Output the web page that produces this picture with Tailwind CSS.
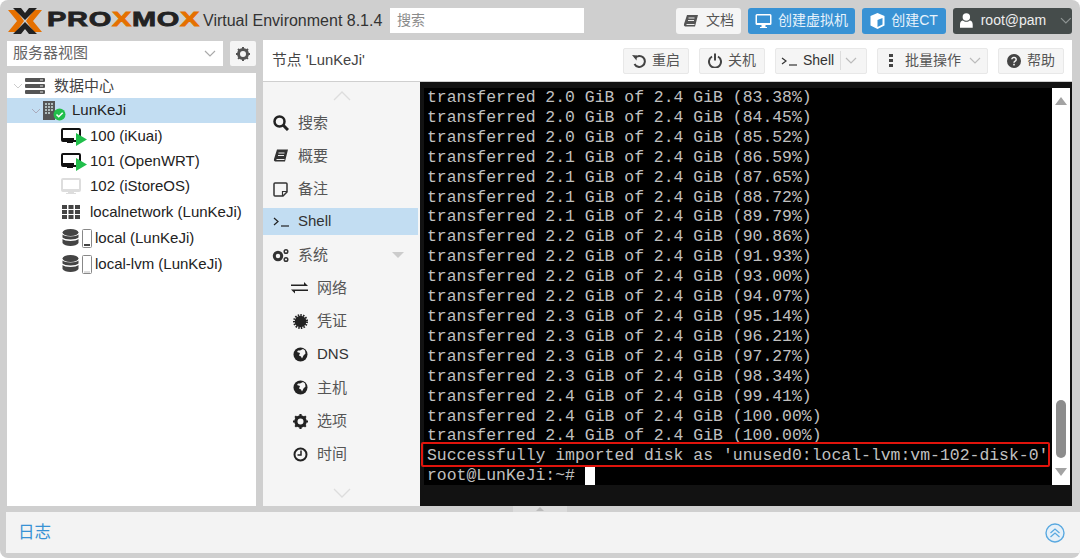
<!DOCTYPE html>
<html lang="en">
<head>
    <meta charset="UTF-8">
    <title>LunKeJi - Proxmox Virtual Environment</title>
    <script src="https://cdn.jsdelivr.net/npm/@tailwindcss/browser@4"></script>
</head>
<body class="bg-white font-['Liberation_Sans','Noto_Sans_CJK_SC',sans-serif] text-[15px] text-[#3d3d3d]">
<div class="w-[1080px] h-[558px] bg-[#cfcfcf] rounded-[8px] flex flex-col overflow-hidden">

    <!-- top bar -->
    <header class="h-[40px] shrink-0 flex items-center pt-[1px] pl-[8px] pr-[8px]">
        <svg width="34" height="26" viewBox="0 0 34 26" class="shrink-0">
            <path d="M0 2h8l8 11-8 11h-8l9-11zM34 2h-8l-8 11 8 11h8l-9-11z" fill="#e57000"/>
            <path d="M5 0h8l4 5 4-5h8l-12 12zM5 26h8l4-5 4 5h8l-12-12z" fill="#222"/>
        </svg>
        <div class="ml-[5px] w-[156px] shrink-0">
            <span class="inline-block origin-left scale-x-[1.38] text-[21px] leading-none font-bold tracking-[0.500px] whitespace-nowrap text-[#222] [-webkit-text-stroke:0.800px_#222]">PRO<span class="text-[#e57000] [-webkit-text-stroke:0.800px_#e57000]">X</span>MO<span class="text-[#e57000] [-webkit-text-stroke:0.800px_#e57000]">X</span></span>
        </div>
        <span class="w-[187px] shrink-0 text-[16px] text-[#333] whitespace-nowrap">Virtual Environment 8.1.4</span>
        <div class="w-[194px] h-[25px] bg-white flex items-center px-[7px] text-[14px] text-[#8b8b8b]">搜索</div>
        <div class="ml-auto flex items-center gap-[7px] text-[14px]">
            <button class="w-[65px] h-[26px] bg-[#f5f5f5] rounded-[3px] flex items-center justify-center gap-[7px] text-[#555]">
                <svg width="16" height="14" viewBox="0 0 16 14"><path d="M4 1h11l-3 11.500h-10a2 2 0 0 1-1-2.500z" fill="#555"/><path d="M3.500 10.500h8" stroke="#eee"/><path d="M5.500 4h6M5 6.500h6" stroke="#eee"/></svg>
                文档
            </button>
            <button class="w-[107px] h-[26px] bg-[#3892d4] rounded-[3px] flex items-center justify-center gap-[6px] text-white">
                <svg width="17" height="16" viewBox="0 0 17 16"><path d="M2 1h13a1.500 1.500 0 0 1 1.500 1.500v8a1.500 1.500 0 0 1-1.500 1.500h-13a1.500 1.500 0 0 1-1.500-1.500v-8a1.500 1.500 0 0 1 1.500-1.500z" fill="#fff"/><rect x="2" y="2.500" width="13" height="7.500" fill="#3892d4"/><path d="M6.500 12h4v2h1.500v1h-7v-1h1.500z" fill="#fff"/></svg>
                <span class="text-[#e8f3fb]">创建虚拟机</span>
            </button>
            <button class="w-[84px] h-[26px] bg-[#3892d4] rounded-[3px] flex items-center justify-center gap-[6px] text-white">
                <svg width="15" height="16" viewBox="0 0 15 16"><path d="M7.500 0l7 3v9.500l-7 3.500-7-3.500v-9.500z" fill="#fff"/><path d="M7.500 7l5-2v6.500l-5 2.500z" fill="#3892d4"/></svg>
                <span class="text-[#e8f3fb]">创建CT</span>
            </button>
            <button class="w-[119px] h-[26px] bg-[#454c4b] rounded-[3px] flex items-center pl-[7px] gap-[8px] text-[#eee]">
                <svg width="13" height="15" viewBox="0 0 13 15"><circle cx="6.500" cy="4" r="3.800" fill="#fff"/><path d="M0 15v-3.500c0-2.500 1.500-4 3-4 1 1 2 1.200 3.500 1.200s2.500-.2 3.500-1.200c1.500 0 3 1.500 3 4v3.500z" fill="#fff"/></svg>
                root@pam
                <svg width="12" height="7" viewBox="0 0 12 7" class="ml-[6px]"><path d="M1 1l5 5 5-5" fill="none" stroke="#8f9594" stroke-width="1.200"/></svg>
            </button>
        </div>
    </header>

    <!-- main area -->
    <main class="h-[466px] shrink-0 flex gap-[7px] px-[7px]">
        <!-- resource tree -->
        <aside class="w-[249px] shrink-0 flex flex-col">
            <div class="mt-[1px] h-[25px] flex gap-[7px] shrink-0">
                <div class="w-[216px] bg-white flex items-center justify-between pl-[6px] pr-[7px] text-[#666]">
                    服务器视图
                    <svg width="12" height="7" viewBox="0 0 12 7"><path d="M1 1l5 5 5-5" fill="none" stroke="#aaa" stroke-width="1.200"/></svg>
                </div>
                <div class="w-[26px] bg-[#f5f5f5] rounded-[2px] flex items-center justify-center">
                    <svg width="14" height="14" viewBox="0 0 14 14"><circle cx="7" cy="7" r="4.500" fill="none" stroke="#555" stroke-width="3"/><path d="M7 0v14M0 7h14M2 2l10 10M12 2l-10 10" stroke="#555" stroke-width="2" stroke-dasharray="2.500 9 2.500"/></svg>
                </div>
            </div>
            <div class="mt-[7px] flex-1 bg-white">
                <div class="h-[25px] pt-[1px] flex items-center">
                    <svg width="10" height="6" viewBox="0 0 10 6" class="ml-[6px]"><path d="M1 1l4 4 4-4" fill="none" stroke="#ccc"/></svg>
                    <svg width="20" height="16" viewBox="0 0 20 16" class="ml-[2px]"><rect y="0" width="20" height="4" rx="1" fill="#555"/><rect y="6" width="20" height="4" rx="1" fill="#555"/><rect y="12" width="20" height="4" rx="1" fill="#555"/><path d="M15 2h3M15 8h3M15 14h3" stroke="#ddd"/></svg>
                    <span class="ml-[9px] text-[#444]">数据中心</span>
                </div>
                <div class="h-[25px] flex items-center bg-[#c2ddf2]">
                    <svg width="10" height="6" viewBox="0 0 10 6" class="ml-[24px]"><path d="M1 1l4 4 4-4" fill="none" stroke="#aab"/></svg>
                    <div class="relative ml-[2px] w-[23px] h-[20px]">
                        <svg width="12" height="19" viewBox="0 0 12 19"><path d="M0 0h12v19h-12z" fill="#555"/><path d="M2 3h2M5 3h2M8 3h2M2 6h2M5 6h2M8 6h2M2 9h2M5 9h2M8 9h2M2 12h2M5 12h2" stroke="#cdd" stroke-width="1.500"/></svg>
                        <svg width="13" height="13" viewBox="0 0 13 13" class="absolute left-[10px] top-[7px]"><circle cx="6.500" cy="6.500" r="6" fill="#21bf4b"/><path d="M3.500 6.500l2.200 2.200 4-4" fill="none" stroke="#fff" stroke-width="1.600"/></svg>
                    </div>
                    <span class="ml-[6px] text-[#222]">LunKeJi</span>
                </div>
                <div class="h-[25px] mt-[1px] flex items-center pl-[54px]">
                    <svg width="26" height="18" viewBox="0 0 26 18"><path d="M2 1h16a1 1 0 0 1 1 1v10a1 1 0 0 1-1 1h-16a1 1 0 0 1-1-1v-10a1 1 0 0 1 1-1z" fill="none" stroke="#111" stroke-width="2"/><path d="M1 10h12v3h-12zM6 13h6v2h-6z" fill="#111"/><path d="M15 5l11 6.500-11 6.500z" fill="#21bf4b"/></svg>
                    <span class="ml-[3px] text-[#222]">100 (iKuai)</span>
                </div>
                <div class="h-[25px] flex items-center pl-[54px]">
                    <svg width="26" height="18" viewBox="0 0 26 18"><path d="M2 1h16a1 1 0 0 1 1 1v10a1 1 0 0 1-1 1h-16a1 1 0 0 1-1-1v-10a1 1 0 0 1 1-1z" fill="none" stroke="#111" stroke-width="2"/><path d="M1 10h12v3h-12zM6 13h6v2h-6z" fill="#111"/><path d="M15 5l11 6.500-11 6.500z" fill="#21bf4b"/></svg>
                    <span class="ml-[3px] text-[#222]">101 (OpenWRT)</span>
                </div>
                <div class="h-[25px] flex items-center pl-[54px]">
                    <svg width="26" height="18" viewBox="0 0 26 18"><path d="M2 1h16a1 1 0 0 1 1 1v10a1 1 0 0 1-1 1h-16a1 1 0 0 1-1-1v-10a1 1 0 0 1 1-1z" fill="none" stroke="#ddd" stroke-width="2"/><path d="M1 11h18v2h-18zM7 13h6v2h2v1h-10v-1h2z" fill="#ddd"/></svg>
                    <span class="ml-[3px] text-[#222]">102 (iStoreOS)</span>
                </div>
                <div class="h-[26px] flex items-center pl-[55px]">
                    <svg width="18" height="14" viewBox="0 0 18 14" fill="#444"><rect width="5" height="4"/><rect x="6.500" width="5" height="4"/><rect x="13" width="5" height="4"/><rect y="5" width="5" height="4"/><rect x="6.500" y="5" width="5" height="4"/><rect x="13" y="5" width="5" height="4"/><rect y="10" width="5" height="4"/><rect x="6.500" y="10" width="5" height="4"/><rect x="13" y="10" width="5" height="4"/></svg>
                    <span class="ml-[10px] text-[#222]">localnetwork (LunKeJi)</span>
                </div>
                <div class="h-[26px] flex items-center pl-[55px]">
                    <svg width="17" height="18" viewBox="0 0 17 18"><ellipse cx="8.500" cy="3.500" rx="8" ry="3.500" fill="#444"/><path d="M.5 5.500c2 2.500 14 2.500 16 0v3c-2 2.500-14 2.500-16 0zM.5 10c2 2.500 14 2.500 16 0v4c-2 4-14 4-16 0z" fill="#444"/></svg>
                    <svg width="10" height="19" viewBox="0 0 10 19" class="ml-[3px]"><rect x=".5" y=".5" width="9" height="18" rx="1" fill="#fff" stroke="#888"/><rect x="2" y="15" width="6" height="2" fill="#444"/></svg>
                    <span class="ml-[3px] text-[#222]">local (LunKeJi)</span>
                </div>
                <div class="h-[26px] flex items-center pl-[55px]">
                    <svg width="17" height="18" viewBox="0 0 17 18"><ellipse cx="8.500" cy="3.500" rx="8" ry="3.500" fill="#444"/><path d="M.5 5.500c2 2.500 14 2.500 16 0v3c-2 2.500-14 2.500-16 0zM.5 10c2 2.500 14 2.500 16 0v4c-2 4-14 4-16 0z" fill="#444"/></svg>
                    <svg width="10" height="19" viewBox="0 0 10 19" class="ml-[3px]"><rect x=".5" y=".5" width="9" height="18" rx="1" fill="#fff" stroke="#888"/><rect x="2" y="16.500" width="6" height="1" fill="#bbb"/></svg>
                    <span class="ml-[3px] text-[#222]">local-lvm (LunKeJi)</span>
                </div>
            </div>
        </aside>

        <!-- node panel -->
        <section class="w-[809px] shrink-0 flex flex-col">
            <div class="h-[42px] shrink-0 bg-white border-b border-[#cfcfcf] flex items-center pl-[9px] pr-[8px] text-[#444]">
                <span class="text-[14.800px]">节点 'LunKeJi'</span>
                <div class="ml-auto flex items-center gap-[10px] text-[14px] text-[#555]">
                    <button class="w-[66px] h-[26px] bg-[#f5f5f5] border border-[#e8e8e8] rounded-[2px] flex items-center justify-center gap-[6px]">
                        <svg width="14" height="14" viewBox="0 0 14 14"><path d="M3 4a5.500 5.500 0 1 1-.5 6" fill="none" stroke="#444" stroke-width="2"/><path d="M0 1l5 .5-.5 5z" fill="#444"/></svg>
                        重启
                    </button>
                    <button class="w-[66px] h-[26px] bg-[#f5f5f5] border border-[#e8e8e8] rounded-[2px] flex items-center justify-center gap-[6px]">
                        <svg width="14" height="15" viewBox="0 0 14 15"><path d="M4 3.500a6 6 0 1 0 6 0" fill="none" stroke="#444" stroke-width="2"/><path d="M7 .5v7" stroke="#444" stroke-width="2"/></svg>
                        关机
                    </button>
                    <button class="w-[92px] h-[26px] bg-[#f5f5f5] border border-[#e8e8e8] rounded-[2px] flex items-center pl-[5px]">
                        <svg width="16" height="10" viewBox="0 0 16 10"><path d="M1 2l4 3-4 3" fill="none" stroke="#333" stroke-width="1.200"/><path d="M8 9h8" stroke="#333" stroke-width="1.200"/></svg>
                        <span class="ml-[6px] text-[#333]">Shell</span>
                        <span class="ml-[6px] h-[19px] border-l border-[#ddd]"></span>
                        <svg width="12" height="7" viewBox="0 0 12 7" class="ml-[4px]"><path d="M1 1l5 5 5-5" fill="none" stroke="#bbb" stroke-width="1.200"/></svg>
                    </button>
                    <button class="w-[111px] h-[26px] bg-[#f5f5f5] border border-[#e8e8e8] rounded-[2px] flex items-center pl-[11px]">
                        <svg width="4" height="13" viewBox="0 0 4 13" fill="#444"><rect width="4" height="3"/><rect y="5" width="4" height="3"/><rect y="10" width="4" height="3"/></svg>
                        <span class="ml-[12px]">批量操作</span>
                        <svg width="12" height="7" viewBox="0 0 12 7" class="ml-[8px]"><path d="M1 1l5 5 5-5" fill="none" stroke="#bbb" stroke-width="1.200"/></svg>
                    </button>
                    <button class="w-[66px] h-[26px] bg-[#f5f5f5] border border-[#e8e8e8] rounded-[2px] flex items-center justify-center gap-[6px]">
                        <svg width="14" height="14" viewBox="0 0 14 14"><circle cx="7" cy="7" r="7" fill="#444"/><path d="M4.800 5.300a2.200 2 0 1 1 3.400 1.800c-.8.500-1.200.8-1.200 1.700" fill="none" stroke="#f5f5f5" stroke-width="1.500"/><rect x="6.200" y="9.800" width="1.600" height="1.600" fill="#f5f5f5"/></svg>
                        帮助
                    </button>
                </div>
            </div>
            <div class="flex-1 flex min-h-0">
                <!-- side nav -->
                <nav class="w-[157px] shrink-0 bg-[#f5f5f5] flex flex-col text-[#555]">
                    <div class="h-[24px] pt-[9px] flex items-start justify-center">
                        <svg width="18" height="10" viewBox="0 0 18 10"><path d="M1 9l8-8 8 8" fill="none" stroke="#ddd" stroke-width="1.300"/></svg>
                    </div>
                    <div class="h-[33px] pt-[1px] flex items-center pl-[10px]">
                        <svg width="16" height="16" viewBox="0 0 16 16"><circle cx="6.500" cy="6.500" r="5" fill="none" stroke="#222" stroke-width="2.500"/><path d="M10 10l5 5" stroke="#222" stroke-width="3"/></svg>
                        <span class="ml-[9px]">搜索</span>
                    </div>
                    <div class="h-[33px] pt-[1px] flex items-center pl-[10px]">
                        <svg width="16" height="14" viewBox="0 0 16 14"><path d="M4 .5h11l-3 12h-10a2 2 0 0 1-1-2.500z" fill="#333"/><path d="M3.500 10.500h8M5.500 4h6M5 6.500h6" stroke="#eee"/></svg>
                        <span class="ml-[9px]">概要</span>
                    </div>
                    <div class="h-[33px] pt-[1px] flex items-center pl-[10px]">
                        <svg width="15" height="15" viewBox="0 0 15 15"><path d="M2 1h11a1 1 0 0 1 1 1v8l-4 4h-8a1 1 0 0 1-1-1v-11a1 1 0 0 1 1-1z" fill="none" stroke="#333" stroke-width="1.500"/><path d="M9.500 14v-4.500h4.500" fill="none" stroke="#333" stroke-width="1.200"/></svg>
                        <span class="ml-[10px]">备注</span>
                    </div>
                    <div class="h-[27px] my-[3px] mr-[2px] bg-[#c2ddf2] flex items-center pl-[10px]">
                        <svg width="16" height="10" viewBox="0 0 16 10"><path d="M1 1l4 3.500-4 3.500" fill="none" stroke="#222" stroke-width="1.200"/><path d="M8 9h8" stroke="#222" stroke-width="1.200"/></svg>
                        <span class="ml-[9px] text-[#333]">Shell</span>
                    </div>
                    <div class="h-[33.200px] pt-[1px] flex items-center pl-[9px] pr-[16px]">
                        <svg width="17" height="15" viewBox="0 0 17 15"><circle cx="6" cy="8" r="3.700" fill="none" stroke="#333" stroke-width="3"/><circle cx="14" cy="3.500" r="1.800" fill="none" stroke="#333" stroke-width="1.500"/><circle cx="14" cy="11.500" r="1.800" fill="none" stroke="#333" stroke-width="1.500"/></svg>
                        <span class="ml-[9px]">系统</span>
                        <svg width="12" height="6" viewBox="0 0 12 6" class="ml-auto"><path d="M0 0h12l-6 6z" fill="#ccc"/></svg>
                    </div>
                    <div class="h-[33.200px] pt-[1px] flex items-center pl-[28px]">
                        <svg width="17" height="13" viewBox="0 0 17 13" fill="#222"><path d="M0 2.500h13v-2.500l4 4h-17zM17 9h-13v2.500l-4-4h17z"/></svg>
                        <span class="ml-[9px]">网络</span>
                    </div>
                    <div class="h-[33.200px] pt-[1px] flex items-center pl-[30px]">
                        <svg width="15" height="15" viewBox="0 0 15 15"><circle cx="7.500" cy="7.500" r="5.800" fill="#222"/><circle cx="7.500" cy="7.500" r="6.500" fill="none" stroke="#222" stroke-dasharray="1.500 1.200" stroke-width="2"/></svg>
                        <span class="ml-[9px]">凭证</span>
                    </div>
                    <div class="h-[33.200px] pt-[1px] flex items-center pl-[30px]">
                        <svg width="15" height="15" viewBox="0 0 15 15"><circle cx="7.500" cy="7.500" r="7" fill="#222"/><path d="M7 3.500l3-1.500 2 1.500 .5 3-2 2-1.500 3-1-2-2-1 1-2.500-3-1 1-1.500z" fill="#f5f5f5"/></svg>
                        <span class="ml-[9px] text-[#333]">DNS</span>
                    </div>
                    <div class="h-[33.200px] pt-[1px] flex items-center pl-[30px]">
                        <svg width="15" height="15" viewBox="0 0 15 15"><circle cx="7.500" cy="7.500" r="7" fill="#222"/><path d="M7 3.500l3-1.500 2 1.500 .5 3-2 2-1.500 3-1-2-2-1 1-2.500-3-1 1-1.500z" fill="#f5f5f5"/></svg>
                        <span class="ml-[9px]">主机</span>
                    </div>
                    <div class="h-[33.200px] pt-[1px] flex items-center pl-[30px]">
                        <svg width="15" height="15" viewBox="0 0 14 14"><circle cx="7" cy="7" r="4.300" fill="none" stroke="#222" stroke-width="3"/><path d="M7 0v14M0 7h14M2 2l10 10M12 2l-10 10" stroke="#222" stroke-width="2" stroke-dasharray="2.500 9 2.500"/></svg>
                        <span class="ml-[9px]">选项</span>
                    </div>
                    <div class="h-[33.200px] pt-[1px] flex items-center pl-[30px]">
                        <svg width="15" height="15" viewBox="0 0 15 15"><circle cx="7.500" cy="7.500" r="6" fill="none" stroke="#222" stroke-width="2"/><path d="M8 3.500v4.500h-3.500" fill="none" stroke="#222" stroke-width="1.500"/></svg>
                        <span class="ml-[9px]">时间</span>
                    </div>
                    <div class="flex-1 flex items-end justify-center pb-[8px]">
                        <svg width="18" height="10" viewBox="0 0 18 10"><path d="M1 1l8 8 8-8" fill="none" stroke="#ddd" stroke-width="1.300"/></svg>
                    </div>
                </nav>
                <!-- terminal -->
                <div class="flex-1 bg-[#121212] flex items-start pt-[6px] pl-[4px] pr-[2px]">
                    <div class="relative w-[628px] h-[397px] bg-black pl-[3px] font-['Liberation_Mono',monospace] text-[16.450px] leading-[19.900px] text-[#c0c0c0] whitespace-nowrap">
                        <div>transferred 2.0 GiB of 2.4 GiB (83.38%)</div>
                        <div>transferred 2.0 GiB of 2.4 GiB (84.45%)</div>
                        <div>transferred 2.0 GiB of 2.4 GiB (85.52%)</div>
                        <div>transferred 2.1 GiB of 2.4 GiB (86.59%)</div>
                        <div>transferred 2.1 GiB of 2.4 GiB (87.65%)</div>
                        <div>transferred 2.1 GiB of 2.4 GiB (88.72%)</div>
                        <div>transferred 2.1 GiB of 2.4 GiB (89.79%)</div>
                        <div>transferred 2.2 GiB of 2.4 GiB (90.86%)</div>
                        <div>transferred 2.2 GiB of 2.4 GiB (91.93%)</div>
                        <div>transferred 2.2 GiB of 2.4 GiB (93.00%)</div>
                        <div>transferred 2.2 GiB of 2.4 GiB (94.07%)</div>
                        <div>transferred 2.3 GiB of 2.4 GiB (95.14%)</div>
                        <div>transferred 2.3 GiB of 2.4 GiB (96.21%)</div>
                        <div>transferred 2.3 GiB of 2.4 GiB (97.27%)</div>
                        <div>transferred 2.3 GiB of 2.4 GiB (98.34%)</div>
                        <div>transferred 2.4 GiB of 2.4 GiB (99.41%)</div>
                        <div>transferred 2.4 GiB of 2.4 GiB (100.00%)</div>
                        <div>transferred 2.4 GiB of 2.4 GiB (100.00%)</div>
                        <div>Successfully imported disk as 'unused0:local-lvm:vm-102-disk-0'</div>
                        <div>root@LunKeJi:~# <span class="inline-block w-[10px] h-[19px] bg-white align-top"></span></div>
                        <!-- red highlight over the success line -->
                        <div class="absolute left-[-3px] top-[354px] w-[629px] h-[25px] border-2 border-[#e0140c] rounded-[2px]"></div>
                    </div>
                    <!-- scrollbar -->
                    <div class="w-[18px] h-[397px] bg-white flex flex-col items-center pt-[9px] pb-[9px]">
                        <svg width="12" height="8" viewBox="0 0 12 8"><path d="M6 0l6 8h-12z" fill="#a3a3a3"/></svg>
                        <div class="mt-auto w-[10px] h-[58px] rounded-[5px] bg-[#8c8c8c]"></div>
                        <svg width="12" height="8" viewBox="0 0 12 8" class="mt-[10px]"><path d="M0 0h12l-6 8z" fill="#a3a3a3"/></svg>
                    </div>
                </div>
            </div>
        </section>
    </main>

    <!-- splitter handle -->
    <div class="h-[6px] shrink-0 flex justify-center">
        <div class="w-[54px] h-[6px] bg-[#dcdcdc] flex justify-center pt-[1px] ml-[-1px]">
            <svg width="8" height="4" viewBox="0 0 8 4"><path d="M4 0l4 4h-8z" fill="#bbb"/></svg>
        </div>
    </div>

    <!-- log panel -->
    <footer class="h-[41px] ml-[6px] shrink-0 bg-[#f3f3f3] flex items-center justify-between pl-[12px] pr-[15px]">
        <span class="text-[16.500px] text-[#3892d4]">日志</span>
        <svg width="20" height="20" viewBox="0 0 20 20"><circle cx="10" cy="10" r="9" fill="#e6f0f8" stroke="#5aa9e0" stroke-width="1.400"/><path d="M5.500 10l4.500-4 4.500 4M5.500 14l4.500-4 4.500 4" fill="none" stroke="#5aa9e0" stroke-width="1.300"/></svg>
    </footer>
</div>
</body>
</html>
